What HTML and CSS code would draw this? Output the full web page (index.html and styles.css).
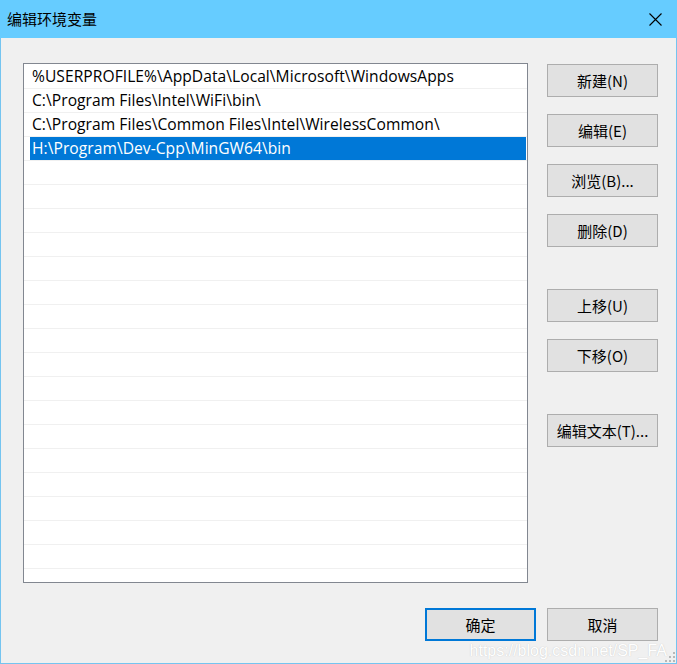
FILE: index.html
```html
<!DOCTYPE html>
<html lang="zh-CN">
<head>
<meta charset="utf-8">
<title>编辑环境变量</title>
<link rel="stylesheet" href="styles.css">
</head>
<body>
<div class="window">
  <div class="titlebar">
    <span class="title">编辑环境变量</span>
    <svg class="close" width="13" height="13" viewBox="0 0 13 13"><path d="M0.5 0.5 L12.5 12.5 M12.5 0.5 L0.5 12.5" stroke="#000" stroke-width="1.1" fill="none"/></svg>
  </div>
  <div class="body">
    <div class="main">
      <div class="list">
        <div class="row">%USERPROFILE%\AppData\Local\Microsoft\WindowsApps</div>
        <div class="row">C:\Program Files\Intel\WiFi\bin\</div>
        <div class="row">C:\Program Files\Common Files\Intel\WirelessCommon\</div>
        <div class="row selected"><span class="sel">H:\Program\Dev-Cpp\MinGW64\bin</span></div>
        <div class="row"></div><div class="row"></div><div class="row"></div><div class="row"></div>
        <div class="row"></div><div class="row"></div><div class="row"></div><div class="row"></div>
        <div class="row"></div><div class="row"></div><div class="row"></div><div class="row"></div>
        <div class="row"></div><div class="row"></div><div class="row"></div><div class="row"></div>
        <div class="row"></div><div class="row last"></div>
      </div>
      <div class="side">
        <div class="group">
          <button class="btn">新建(N)</button>
          <button class="btn">编辑(E)</button>
          <button class="btn">浏览(B)...</button>
          <button class="btn">删除(D)</button>
        </div>
        <div class="group">
          <button class="btn">上移(U)</button>
          <button class="btn">下移(O)</button>
        </div>
        <div class="group">
          <button class="btn">编辑文本(T)...</button>
        </div>
      </div>
    </div>
    <div class="footer">
      <button class="btn default">确定</button>
      <button class="btn">取消</button>
    </div>
    <div class="watermark">https://blog.csdn.net/SP_FA</div>
    <div class="grip">
      <i class="d d1"></i><i class="d d2"></i><i class="d d3"></i>
      <i class="d d4"></i><i class="d d5"></i><i class="d d6"></i>
    </div>
  </div>
</div>
</body>
</html>
```
FILE: styles.css
```css
html, body {
  margin: 0;
  padding: 0;
}
body {
  width: 677px;
  height: 664px;
  overflow: hidden;
  background: #f0f0f0;
}
.window {
  width: 677px;
  height: 664px;
  display: flex;
  flex-direction: column;
  font-family: "Noto Sans CJK SC", "Noto Sans", sans-serif;
  color: #000;
}
.titlebar {
  height: 38px;
  flex: none;
  background: #66ccff;
  display: flex;
  align-items: center;
  justify-content: space-between;
  padding: 0 15px 0 7px;
}
.title {
  font-size: 15px;
  line-height: 20px;
  margin-top: -1px;
}
.close {
  display: block;
}
.body {
  flex: 1;
  position: relative;
  border: 1px solid #74c4f0;
  border-top: none;
  background: #f0f0f0;
  padding: 25px 0 0 22px;
}
.main {
  display: flex;
  align-items: flex-start;
}
.list {
  width: 505px;
  height: 520px;
  box-sizing: border-box;
  border: 1px solid #828790;
  padding-top: 1px;
  background: #fff;
  overflow: hidden;
  font-family: "Open Sans", "Noto Sans", sans-serif;
  font-size: 15.6px;
}
.row {
  height: 24px;
  box-sizing: border-box;
  border-bottom: 1px solid #f0f0f0;
  padding-left: 8px;
  line-height: 23px;
  white-space: nowrap;
  letter-spacing: 0.05px;
}
.row.selected {
  padding-left: 6px;
  padding-right: 1px;
}
.sel {
  display: block;
  background: #0078d7;
  color: #fff;
  padding-left: 2px;
  height: 23px;
}
.side {
  margin-left: 19px;
  margin-top: 1px;
  display: flex;
  flex-direction: column;
  gap: 42px;
}
.group {
  display: flex;
  flex-direction: column;
  gap: 17px;
}
.btn {
  width: 111px;
  height: 33px;
  box-sizing: border-box;
  background: #e1e1e1;
  border: 1px solid #adadad;
  font-family: "Noto Sans CJK SC", "Noto Sans", sans-serif;
  font-size: 15px;
  color: #000;
  padding: 0;
  margin: 0;
  line-height: 20px;
}
.btn.default {
  border: 2px solid #0078d7;
}
.footer {
  display: flex;
  justify-content: flex-end;
  gap: 11px;
  margin-top: 25px;
  margin-right: 18px;
}
.watermark {
  position: absolute;
  right: 9px;
  bottom: 3px;
  font-family: "Liberation Sans", Arial, sans-serif;
  font-size: 16px;
  color: #ffffff;
  text-shadow: 0 0 1px rgba(170, 170, 170, 0.7);
}
.grip {
  position: absolute;
  right: 1px;
  bottom: 1px;
  width: 11px;
  height: 11px;
}
.d {
  position: absolute;
  width: 2px;
  height: 2px;
  background: #b8b8b8;
}
.d1 { right: 0; bottom: 0; }
.d2 { right: 4px; bottom: 0; }
.d3 { right: 8px; bottom: 0; }
.d4 { right: 0; bottom: 4px; }
.d5 { right: 4px; bottom: 4px; }
.d6 { right: 0; bottom: 8px; }
```
